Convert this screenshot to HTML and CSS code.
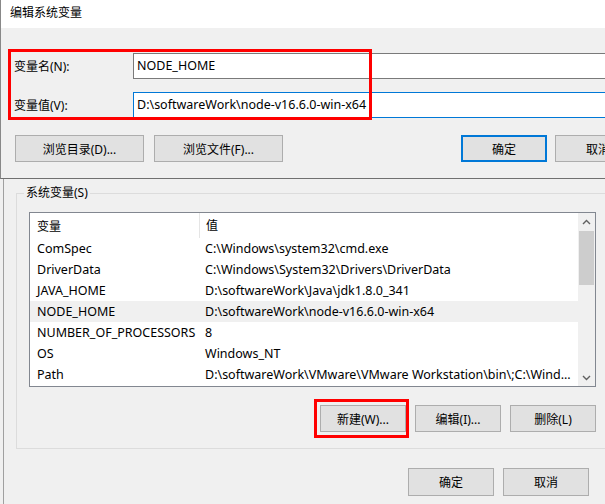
FILE: index.html
```html
<!DOCTYPE html>
<html>
<head>
<meta charset="utf-8">
<link rel="stylesheet" href="styles.css">
</head>
<body>
<div class="desk">
  <div class="envwin">
    <div class="group">
      <span class="legend">系统变量(S)</span>
      <div class="list">
        <div class="cols">
          <div class="head">
            <div class="c1">变量</div>
            <div class="c2">值</div>
          </div>
          <div class="row"><div class="c1">ComSpec</div><div class="c2">C:\Windows\system32\cmd.exe</div></div>
          <div class="row"><div class="c1">DriverData</div><div class="c2">C:\Windows\System32\Drivers\DriverData</div></div>
          <div class="row"><div class="c1">JAVA_HOME</div><div class="c2">D:\softwareWork\Java\jdk1.8.0_341</div></div>
          <div class="row sel"><div class="c1">NODE_HOME</div><div class="c2">D:\softwareWork\node-v16.6.0-win-x64</div></div>
          <div class="row"><div class="c1">NUMBER_OF_PROCESSORS</div><div class="c2">8</div></div>
          <div class="row"><div class="c1">OS</div><div class="c2">Windows_NT</div></div>
          <div class="row"><div class="c1">Path</div><div class="c2">D:\softwareWork\VMware\VMware Workstation\bin\;C:\Wind...</div></div>
        </div>
        <div class="vscroll">
          <div class="arrow"><svg width="9" height="6" viewBox="0 0 9 6"><polyline points="1,5 4.5,1.5 8,5" fill="none" stroke="#606060" stroke-width="1.4"/></svg></div>
          <div class="track"><div class="thumb"></div></div>
          <div class="arrow"><svg width="9" height="6" viewBox="0 0 9 6"><polyline points="1,1 4.5,4.5 8,1" fill="none" stroke="#606060" stroke-width="1.4"/></svg></div>
        </div>
      </div>
      <div class="btnrow">
        <div class="hl"><button class="btn">新建(W)...</button></div>
        <button class="btn">编辑(I)...</button>
        <button class="btn">删除(L)</button>
      </div>
    </div>
    <div class="footer">
      <button class="btn tall">确定</button>
      <button class="btn tall">取消</button>
    </div>
  </div>

  <div class="editwin">
    <div class="title">编辑系统变量</div>
    <div class="body">
      <div class="fields">
        <div class="frame"></div>
        <div class="field"><label>变量名(N):</label><div class="input">NODE_HOME</div></div>
        <div class="field"><label>变量值(V):</label><div class="input focus">D:\softwareWork\node-v16.6.0-win-x64</div></div>
      </div>
      <div class="actions">
        <button class="btn wide">浏览目录(D)...</button>
        <button class="btn wide">浏览文件(F)...</button>
        <div class="spacer"></div>
        <button class="btn default">确定</button>
        <button class="btn">取消</button>
      </div>
    </div>
  </div>
</div>
</body>
</html>
```
FILE: styles.css
```css
* { box-sizing: border-box; }
html, body { margin: 0; padding: 0; }
body {
  width: 605px;
  height: 504px;
  overflow: hidden;
  background: #f0f0f0;
  font-family: "Noto Sans", "Noto Sans CJK SC", sans-serif;
  font-size: 12px;
  color: #000;
}
.desk { position: relative; width: 605px; height: 504px; overflow: hidden; }

/* background window */
.envwin {
  position: absolute;
  left: 3px;
  top: 170px;
  width: 720px;
  height: 340px;
  background: #f0f0f0;
  border-left: 1px solid #a0a0a0;
  padding-top: 23px;
}
.group {
  position: relative;
  margin-left: 12px;
  width: 593px;
  border: 1px solid #dcdcdc;
  padding: 18px 12px 16px 12px;
}
.legend {
  position: absolute;
  left: 7px;
  top: -9px;
  padding: 0 2px;
  background: #f0f0f0;
  line-height: 16px;
}
.list {
  display: flex;
  height: 175px;
  border: 1px solid #828790;
  background: #fff;
}
.cols { flex: 1; }
.head, .row { display: flex; align-items: center; }
.head { height: 25px; }
.row { height: 21px; font-size: 12.5px; }
.row.sel { background: #f0f0f0; }
.c1 { width: 169px; padding-left: 7px; white-space: nowrap; }
.c2 { flex: 1; padding-left: 6px; white-space: nowrap; overflow: hidden; }
.head .c2 { border-left: 1px solid #e5e5e5; height: 25px; line-height: 25px; }
.vscroll {
  width: 17px;
  background: #f0f0f0;
  display: flex;
  flex-direction: column;
}
.arrow { height: 17px; display: flex; align-items: center; justify-content: center; }
.track { flex: 1; padding: 1px 1px; }
.thumb { height: 54px; background: #cdcdcd; }

.btnrow {
  display: flex;
  justify-content: flex-end;
  gap: 9px;
  margin-top: 18px;
}
.hl { position: relative; display: flex; }
.hl::after {
  content: "";
  position: absolute;
  left: -6px; top: -6px; right: -3px; bottom: -6px;
  border: 3px solid #f00;
}
.btn {
  font: inherit;
  color: #000;
  width: 86px;
  height: 27px;
  background: #e1e1e1;
  border: 1px solid #adadad;
  padding: 0;
  margin: 0;
}
.btn.tall { height: 28px; }
.btn.wide { width: 129px; }
.btn.default { border: 2px solid #0078d7; }
.footer {
  display: flex;
  justify-content: flex-end;
  gap: 9px;
  margin-top: 19px;
  width: 585px;
}

/* foreground dialog */
.editwin {
  position: absolute;
  left: 0;
  top: 0;
  width: 720px;
  height: 179px;
  border-left: 1px solid #888;
  border-bottom: 1px solid #707070;
  background: #f0f0f0;
}
.title {
  height: 28px;
  background: #fff;
  padding-left: 9px;
  line-height: 26px;
}
.body { padding: 25px 0 0 0; }
.fields { position: relative; display: flex; flex-direction: column; gap: 13px; }
.frame {
  position: absolute;
  left: 7px; top: -4px;
  width: 364px; height: 71px;
  border: 3px solid #f00;
}
.field { display: flex; align-items: center; }
.field label { width: 132px; padding-left: 13px; }
.input {
  flex: 1;
  height: 26px;
  border: 1px solid #7a7a7a;
  background: #fff;
  padding-left: 3px;
  line-height: 24px;
  white-space: nowrap;
  font-size: 12.5px;
}
.input.focus { border-color: #0078d7; }
.actions {
  display: flex;
  gap: 10px;
  margin-top: 17px;
  padding-left: 14px;
  width: 640px;
}
.spacer { flex: 1; }
.actions .default { margin-right: -2px; }
```
